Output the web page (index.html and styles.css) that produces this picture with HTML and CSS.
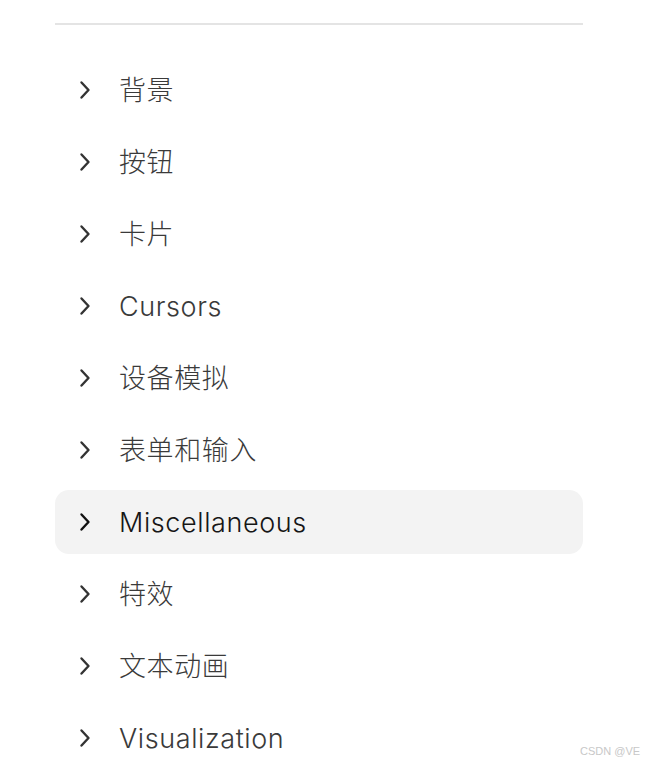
FILE: index.html
```html
<!DOCTYPE html>
<html>
<head>
<meta charset="utf-8">
<link rel="stylesheet" href="styles.css">
</head>
<body>
<div class="page">
  <div class="divider"></div>
  <ul class="menu">
    <li class="item"><svg class="chev" viewBox="0 0 12 20"><path d="M2.5 2.5 L9.5 10 L2.5 17.5"/></svg><span>背景</span></li>
    <li class="item"><svg class="chev" viewBox="0 0 12 20"><path d="M2.5 2.5 L9.5 10 L2.5 17.5"/></svg><span>按钮</span></li>
    <li class="item"><svg class="chev" viewBox="0 0 12 20"><path d="M2.5 2.5 L9.5 10 L2.5 17.5"/></svg><span>卡片</span></li>
    <li class="item"><svg class="chev" viewBox="0 0 12 20"><path d="M2.5 2.5 L9.5 10 L2.5 17.5"/></svg><span>Cursors</span></li>
    <li class="item"><svg class="chev" viewBox="0 0 12 20"><path d="M2.5 2.5 L9.5 10 L2.5 17.5"/></svg><span>设备模拟</span></li>
    <li class="item"><svg class="chev" viewBox="0 0 12 20"><path d="M2.5 2.5 L9.5 10 L2.5 17.5"/></svg><span>表单和输入</span></li>
    <li class="item active"><svg class="chev" viewBox="0 0 12 20"><path d="M2.5 2.5 L9.5 10 L2.5 17.5"/></svg><span>Miscellaneous</span></li>
    <li class="item"><svg class="chev" viewBox="0 0 12 20"><path d="M2.5 2.5 L9.5 10 L2.5 17.5"/></svg><span>特效</span></li>
    <li class="item"><svg class="chev" viewBox="0 0 12 20"><path d="M2.5 2.5 L9.5 10 L2.5 17.5"/></svg><span>文本动画</span></li>
    <li class="item"><svg class="chev" viewBox="0 0 12 20"><path d="M2.5 2.5 L9.5 10 L2.5 17.5"/></svg><span>Visualization</span></li>
  </ul>
</div>
<div class="watermark">CSDN @VE</div>
</body>
</html>
```
FILE: styles.css
```css
html, body {
  margin: 0;
  padding: 0;
  background: #ffffff;
  overflow: hidden;
}
.page {
  width: 528px;
  margin-left: 55px;
  padding-top: 23px;
  font-family: Inter, "Noto Sans CJK SC", sans-serif;
}
.divider {
  height: 2px;
  background: #e4e4e4;
}
.menu {
  list-style: none;
  margin: 33px 0 0 0;
  padding: 0;
  display: flex;
  flex-direction: column;
  gap: 8px;
}
.item {
  height: 64px;
  display: flex;
  align-items: center;
  padding-left: 24px;
  border-radius: 14px;
  font-size: 27px;
  font-weight: 300;
  letter-spacing: 0.6px;
  color: #3a3a3a;
}
.item span {
  margin-left: 28px;
  line-height: 1;
}
.chev {
  width: 12px;
  height: 20px;
  fill: none;
  stroke: #333;
  stroke-width: 2.4;
  stroke-linecap: round;
  stroke-linejoin: round;
}
.active {
  background: #f3f3f3;
  color: #161616;
}
.active .chev {
  stroke: #111;
}
.watermark {
  position: absolute;
  left: 580px;
  top: 745px;
  font-family: "Liberation Sans", sans-serif;
  font-size: 11px;
  color: #c8c8c8;
}
```
